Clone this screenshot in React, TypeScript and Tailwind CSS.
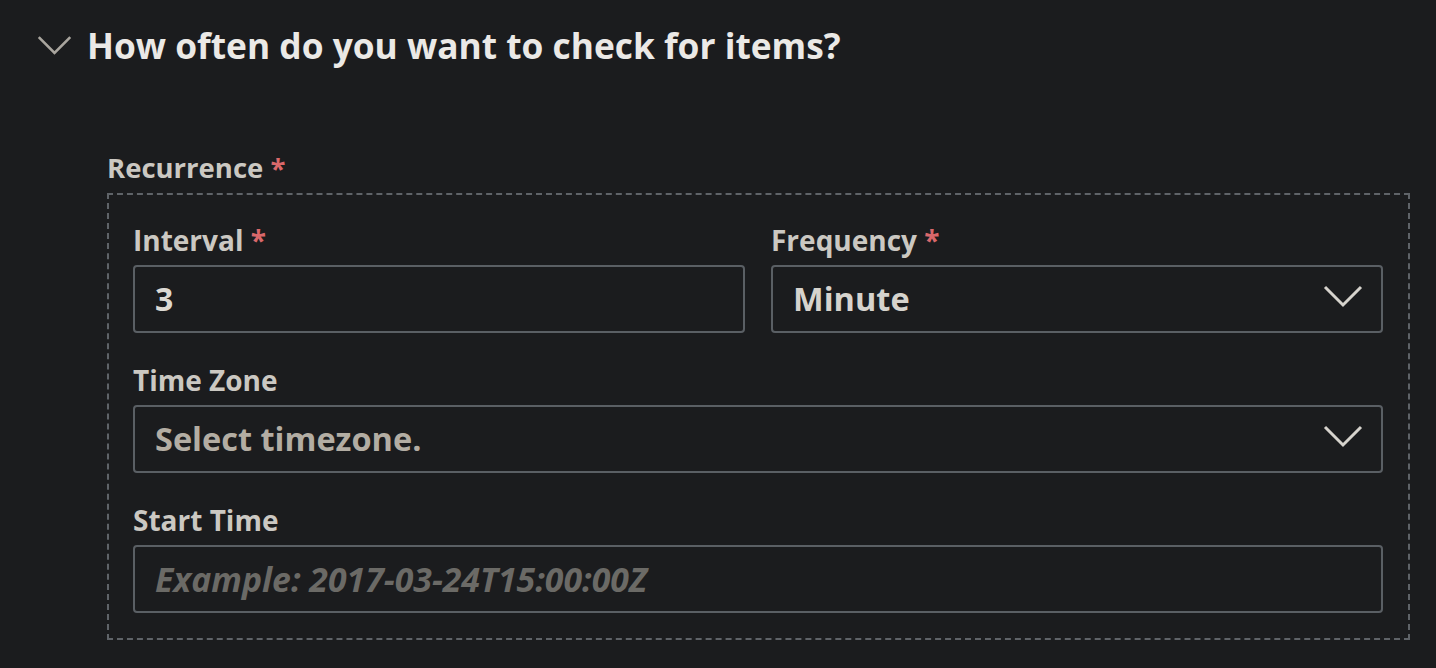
import React from "react";

const Chevron = ({ className }: { className?: string }) => (
  <svg viewBox="0 0 40 24" className={className} fill="none">
    <path d="M2 3 L20 21 L38 3" stroke="currentColor" strokeWidth="3" strokeLinecap="butt" strokeLinejoin="miter" />
  </svg>
);

const font = { fontFamily: '"Open Sans", "Noto Sans", sans-serif' };

export default function App() {
  return (
    <div className="w-[1436px] h-[668px] bg-[#1b1c1e] overflow-hidden" style={font}>
      <div className="flex items-center h-[92px] pl-[37px]">
        <Chevron className="w-[35px] h-[24px] text-[#a9a59e] mb-[2px]" />
        <span className="ml-[15px] text-[35.3px] font-bold text-[#ebe9e6] leading-none">
          How often do you want to check for items?
        </span>
      </div>
      <div className="pl-[107px] pr-[26px] pt-[56px]">
        <div className="text-[27.5px] font-bold text-[#cbc8c2] leading-[40px]">
          Recurrence <span className="text-[#d9686b]">*</span>
        </div>
        <div className="mt-[5px] border-2 border-dashed border-[#5f6368] pl-[24px] pr-[25px] pt-[25px] pb-[25px] flex flex-col">
          <div className="grid grid-cols-2 gap-x-[26px]">
            <div>
              <div className="text-[28px] font-bold text-[#cbc8c2] leading-[40px]">
                Interval <span className="text-[#d9686b]">*</span>
              </div>
              <div className="mt-[5px] h-[68px] rounded-[4px] border-2 border-[#5a5f64] flex items-center px-[20px] text-[32px] font-bold text-[#dcd9d3]">
                3
              </div>
            </div>
            <div>
              <div className="text-[28px] font-bold text-[#cbc8c2] leading-[40px]">
                Frequency <span className="text-[#d9686b]">*</span>
              </div>
              <div className="mt-[5px] h-[68px] rounded-[4px] border-2 border-[#5a5f64] flex items-center justify-between pl-[20px] pr-[18px] text-[32.5px] font-bold text-[#d6d3cd]">
                <span>Minute</span>
                <Chevron className="w-[40px] h-[24px] text-[#d6d3cd] mb-[6px]" />
              </div>
            </div>
          </div>
          <div className="mt-[27px] text-[28px] font-bold text-[#cbc8c2] leading-[40px]">Time Zone</div>
          <div className="mt-[5px] h-[68px] rounded-[4px] border-2 border-[#5a5f64] flex items-center justify-between pl-[20px] pr-[18px] text-[32.5px] font-bold text-[#b3ada3]">
            <span>Select timezone.</span>
            <Chevron className="w-[40px] h-[24px] text-[#d6d3cd] mb-[6px]" />
          </div>
          <div className="mt-[27px] text-[28px] font-bold text-[#cbc8c2] leading-[40px]">Start Time</div>
          <div className="mt-[5px] h-[68px] rounded-[4px] border-2 border-[#5a5f64] flex items-center px-[20px] text-[33.8px] font-bold italic text-[#6b6a66]">
            Example: 2017-03-24T15:00:00Z
          </div>
        </div>
      </div>
    </div>
  );
}
